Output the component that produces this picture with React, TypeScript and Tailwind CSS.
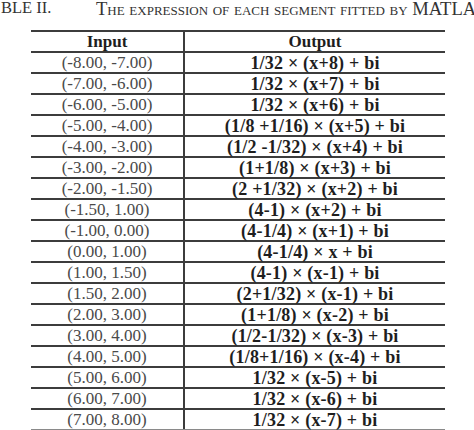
const rows: [string, string][] = [
  ["(-8.00, -7.00)", "1/32 × (x+8) + bi"],
  ["(-7.00, -6.00)", "1/32 × (x+7) + bi"],
  ["(-6.00, -5.00)", "1/32 × (x+6) + bi"],
  ["(-5.00, -4.00)", "(1/8 +1/16) × (x+5) + bi"],
  ["(-4.00, -3.00)", "(1/2 -1/32) × (x+4) + bi"],
  ["(-3.00, -2.00)", "(1+1/8) × (x+3) + bi"],
  ["(-2.00, -1.50)", "(2 +1/32) × (x+2) + bi"],
  ["(-1.50, 1.00)", "(4-1) × (x+2) + bi"],
  ["(-1.00, 0.00)", "(4-1/4) × (x+1) + bi"],
  ["(0.00, 1.00)", "(4-1/4) × x + bi"],
  ["(1.00, 1.50)", "(4-1) × (x-1) + bi"],
  ["(1.50, 2.00)", "(2+1/32) × (x-1) + bi"],
  ["(2.00, 3.00)", "(1+1/8) × (x-2) + bi"],
  ["(3.00, 4.00)", "(1/2-1/32) × (x-3) + bi"],
  ["(4.00, 5.00)", "(1/8+1/16) × (x-4) + bi"],
  ["(5.00, 6.00)", "1/32 × (x-5) + bi"],
  ["(6.00, 7.00)", "1/32 × (x-6) + bi"],
  ["(7.00, 8.00)", "1/32 × (x-7) + bi"],
];

const App = () => {
  return (
    <div
      className="w-[474px] h-[430px] overflow-hidden bg-white"
      style={{ fontFamily: '"Liberation Serif", "Times New Roman", serif' }}
    >
      {/* Caption */}
      <div className="flex h-[30px] whitespace-nowrap overflow-hidden text-[#333333] leading-none">
        <span className="w-[96px] shrink-0 pl-[1px] text-[16.5px]">BLE II.</span>
        <span className="text-[18.6px] [font-variant:small-caps]">
          The expression of each segment fitted by MATLAB
        </span>
      </div>

      {/* Table */}
      <div className="ml-[31px] w-[414px] border-t-2 border-[#3c3c3c]">
        <div className="grid grid-cols-[154px_260px] h-[21px] border-b-2 border-[#3c3c3c] text-[17px] font-bold text-[#1e1e1e] leading-none">
          <div className="flex items-center justify-center border-r-2 border-[#3c3c3c]">Input</div>
          <div className="flex items-center justify-center">Output</div>
        </div>
        {rows.map(([input, output], i) => (
          <div
            key={input}
            className={`grid grid-cols-[154px_260px] h-[21px] border-b-2 leading-none ${
              i === rows.length - 1 ? "border-[#8a8a8a]" : "border-[#3c3c3c]"
            }`}
          >
            <div className="flex items-center justify-center border-r-2 border-[#3c3c3c] text-[17px] text-[#4a4a4a]">
              {input}
            </div>
            <div className="flex items-center justify-center text-[18px] font-bold text-[#1e1e1e] tracking-[0.2px]">
              {output}
            </div>
          </div>
        ))}
      </div>
    </div>
  );
};

export default App;
